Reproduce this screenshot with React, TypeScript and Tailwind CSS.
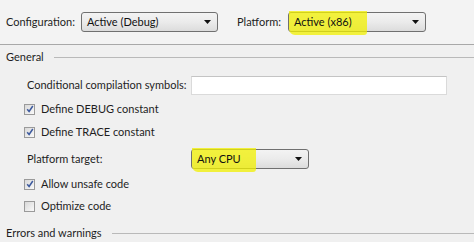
import React from 'react'

const font = { fontFamily: 'Lato, "Open Sans", sans-serif' }

// Win7-style combo box with optional highlighter mark
function Combo({ value, width, mark }: { value: string; width: string; mark?: string }) {
  return (
    <div className={`relative shrink-0 ${width} h-[20px]`}>
      <div className="h-full flex items-center justify-between rounded-[3px] border border-[#707070] bg-gradient-to-b from-[#f3f3f3] via-[#ebebeb] to-[#dcdcdc] pl-[5px] pr-[6px]">
        <span className="relative z-10 text-[#111]">{value}</span>
        <svg width="7" height="4" viewBox="0 0 7 4" className="relative z-10">
          <path d="M0 0h7L3.5 4z" fill="#111" />
        </svg>
      </div>
      {mark && <span className={`absolute top-[-1px] left-[1px] h-[24px] bg-[#f2f000]/75 rounded-bl-[6px] rounded-br-[3px] ${mark}`} />}
    </div>
  )
}

function Check({ checked }: { checked: boolean }) {
  return (
    <div className="shrink-0 w-[11px] h-[11px] border border-[#9a9a9a] bg-gradient-to-br from-[#d8d8d8] to-[#fafafa] flex items-center justify-center">
      {checked && (
        <svg width="8" height="8" viewBox="0 0 8 8">
          <path d="M1.2 4.2l1.9 2.3L6.8 1" stroke="#3d5a9e" strokeWidth="1.5" fill="none" />
        </svg>
      )}
    </div>
  )
}

function GroupHeader({ title }: { title: string }) {
  return (
    <div className="flex items-center h-[20px] pl-[6px] gap-[10px]">
      <span className="whitespace-nowrap">{title}</span>
      <div className="flex-1 h-px bg-[#b9b9b9]" />
    </div>
  )
}

function CheckRow({ label, checked, className = '' }: { label: string; checked: boolean; className?: string }) {
  return (
    <div className={`flex items-center h-[20px] pl-[24px] gap-[6px] whitespace-nowrap ${className}`}>
      <Check checked={checked} />
      <span>{label}</span>
    </div>
  )
}

export default function App() {
  return (
    <div style={font} className="w-[474px] h-[242px] overflow-hidden bg-[#f0f0f0] text-[11px] text-[#1e1e1e]">
      {/* Config / platform bar */}
      <div className="h-[45px] flex items-center pl-[6px] border-b border-[#a8a8a8] bg-[#f3f3f3] whitespace-nowrap">
        <span className="w-[75px] shrink-0">Configuration:</span>
        <Combo value="Active (Debug)" width="w-[137px]" />
        <span className="ml-[19px] w-[51px] shrink-0">Platform:</span>
        <Combo value="Active (x86)" width="w-[138px]" mark="w-[78px]" />
      </div>

      <div className="mt-[2px]">
        <GroupHeader title="General" />
      </div>

      <div className="mt-[8px] flex items-center h-[20px] pl-[27px] whitespace-nowrap">
        <span className="w-[164px] shrink-0">Conditional compilation symbols:</span>
        <div className="w-[256px] h-[19px] bg-white border border-[#dadada] border-t-[#c4c4c4]" />
      </div>

      <CheckRow className="mt-[4px]" label="Define DEBUG constant" checked />
      <CheckRow className="mt-[3px]" label="Define TRACE constant" checked />

      <div className="mt-[7px] flex items-center h-[20px] pl-[27px] whitespace-nowrap">
        <span className="w-[164px] shrink-0">Platform target:</span>
        <Combo value="Any CPU" width="w-[118px]" mark="w-[64px]" />
      </div>

      <CheckRow className="mt-[5px]" label="Allow unsafe code" checked />
      <CheckRow className="mt-[2px]" label="Optimize code" checked={false} />

      <div className="mt-[7px]">
        <GroupHeader title="Errors and warnings" />
      </div>
    </div>
  )
}
